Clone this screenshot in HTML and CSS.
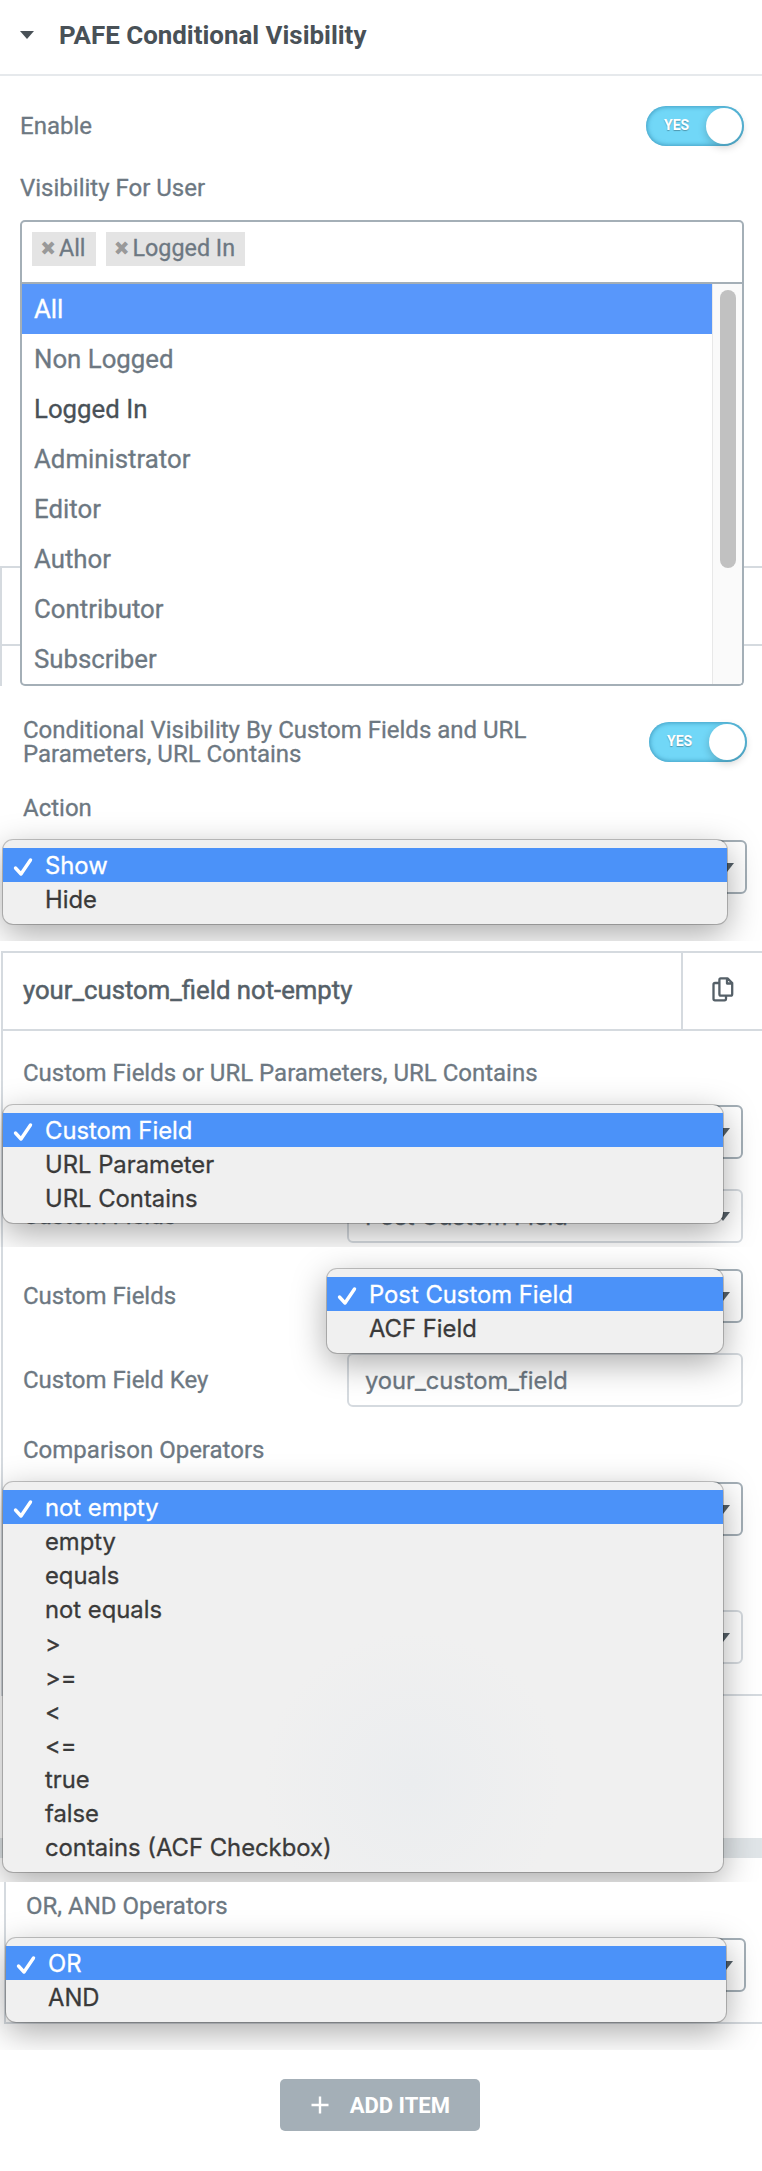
FILE: index.html
```html
<!DOCTYPE html>
<html lang="en">
<head>
    <meta charset="UTF-8">
    <meta name="viewport" content="width=device-width, initial-scale=1.0">
    <title>PAFE Conditional Visibility</title>
    <link rel="stylesheet" href="styles.css">
</head>
<body>
    <header class="panel-header">
        <span class="caret"></span>
        <h1>PAFE Conditional Visibility</h1>
    </header>

    <!-- Visibility for user -->
    <section class="section user-section">
        <div class="behind-panel"></div>
        <div class="control-row">
            <label>Enable</label>
            <div class="switch"><span class="switch-text">YES</span><span class="knob"></span></div>
        </div>
        <label class="stacked">Visibility For User</label>
        <div class="tags-box">
            <span class="tag"><b>×</b>All</span>
            <span class="tag"><b>×</b>Logged In</span>
        </div>
        <div class="results">
            <ul class="results-list">
                <li class="highlighted">All</li>
                <li>Non Logged</li>
                <li class="chosen">Logged In</li>
                <li>Administrator</li>
                <li>Editor</li>
                <li>Author</li>
                <li>Contributor</li>
                <li>Subscriber</li>
            </ul>
            <div class="scrollbar"><div class="thumb"></div></div>
        </div>
    </section>

    <!-- Action -->
    <section class="section action-section">
        <div class="control-row">
            <label>Conditional Visibility By Custom Fields and URL<br>Parameters, URL Contains</label>
            <div class="switch"><span class="switch-text">YES</span><span class="knob"></span></div>
        </div>
        <label class="stacked">Action</label>
        <div class="field">
            <div class="select active"></div>
            <ul class="menu">
                <li class="selected"><svg class="check" viewBox="0 0 20 20"><path d="M2.5 11 L8 17 L17.5 3"/></svg>Show</li>
                <li>Hide</li>
            </ul>
        </div>
    </section>

    <!-- Repeater item -->
    <section class="section item-section">
        <div class="item-box">
            <div class="item-header">
                <div class="item-title">your_custom_field not-empty</div>
                <button class="item-copy">
                    <svg width="22" height="26" viewBox="0 0 22 26"><path d="M7.2 6H3Q1.5 6 1.5 7.5V21.8Q1.5 23.3 3 23.3H12.5Q14 23.3 14 21.8V18.7M8.7 1.3H15.5L20.2 6V17Q20.2 18.7 18.6 18.7H9Q7.4 18.7 7.4 17V3Q7.4 1.3 8.7 1.3ZM15 1.5V6.5H20"/></svg>
                </button>
            </div>
            <div class="item-body">
                <label class="stacked">Custom Fields or URL Parameters, URL Contains</label>
                <div class="field">
                    <div class="select active"></div>
                    <ul class="menu">
                        <li class="selected"><svg class="check" viewBox="0 0 20 20"><path d="M2.5 11 L8 17 L17.5 3"/></svg>Custom Field</li>
                        <li>URL Parameter</li>
                        <li>URL Contains</li>
                    </ul>
                </div>
                <div class="field-row">
                    <label>Custom Fields</label>
                    <div class="select">Post Custom Field</div>
                </div>
            </div>
        </div>
    </section>

    <!-- Comparison -->
    <section class="section compare-section">
        <div class="compare-body">
            <div class="field-row">
                <label>Custom Fields</label>
                <div class="field">
                    <div class="select active"></div>
                    <ul class="menu">
                        <li class="selected"><svg class="check" viewBox="0 0 20 20"><path d="M2.5 11 L8 17 L17.5 3"/></svg>Post Custom Field</li>
                        <li>ACF Field</li>
                    </ul>
                </div>
            </div>
            <div class="field-row">
                <label>Custom Field Key</label>
                <div class="text-input">your_custom_field</div>
            </div>
            <label class="stacked">Comparison Operators</label>
            <div class="field">
                <div class="select active"></div>
                <ul class="menu tinted">
                    <li class="selected"><svg class="check" viewBox="0 0 20 20"><path d="M2.5 11 L8 17 L17.5 3"/></svg>not empty</li>
                    <li>empty</li>
                    <li>equals</li>
                    <li>not equals</li>
                    <li>&gt;</li>
                    <li>&gt;=</li>
                    <li>&lt;</li>
                    <li>&lt;=</li>
                    <li>true</li>
                    <li>false</li>
                    <li>contains (ACF Checkbox)</li>
                </ul>
            </div>
            <div class="select next-select"></div>
        </div>
        <div class="divider-bar"></div>
    </section>

    <!-- OR / AND -->
    <section class="section operator-section">
        <div class="operator-body">
            <label class="stacked">OR, AND Operators</label>
            <div class="field">
                <div class="select active"></div>
                <ul class="menu">
                    <li class="selected"><svg class="check" viewBox="0 0 20 20"><path d="M2.5 11 L8 17 L17.5 3"/></svg>OR</li>
                    <li>AND</li>
                </ul>
            </div>
        </div>
    </section>

    <div class="add-row">
        <button class="add-button">
            <svg width="18" height="18" viewBox="0 0 18 18"><path d="M9 0.5V17.5M0.5 9H17.5"/></svg>
            <span>ADD ITEM</span>
        </button>
    </div>
</body>
</html>
```
FILE: styles.css
```css
* {
    box-sizing: border-box;
}

body {
    margin: 0;
    background-color: #fff;
    font-family: Roboto, "Liberation Sans", sans-serif;
    font-size: 24px;
    line-height: 24px;
    color: #6d7882;
    -webkit-text-stroke: 0.3px;
}

ul {
    list-style: none;
    margin: 0;
    padding: 0;
}

button {
    border: none;
    padding: 0;
    background: none;
    font-family: inherit;
}

label {
    white-space: nowrap;
}

.stacked {
    display: block;
}

.panel-header {
    display: flex;
    align-items: center;
    height: 76px;
    padding: 0 20px 4px;
    border-bottom: 2px solid #e6e9ec;
}

.panel-header h1 {
    margin: 0 0 0 25px;
    font-size: 25.9px;
    font-weight: 700;
    color: #495157;
    -webkit-text-stroke: 0;
}

.caret {
    border: 7.5px solid transparent;
    border-top: 8px solid #495157;
    border-bottom: none;
}

.section {
    position: relative;
    overflow: hidden;
}

.control-row {
    display: flex;
    justify-content: space-between;
    align-items: center;
}

/* switch */
.switch {
    display: flex;
    align-items: center;
    justify-content: space-between;
    width: 98px;
    height: 40px;
    padding: 0 2px 0 18px;
    border-radius: 20px;
    background-color: #71d7f7;
    box-shadow: inset 0 0 4px 1px rgba(35, 120, 160, 0.6);
}

.switch-text {
    font-size: 14px;
    font-weight: 700;
    line-height: 38px;
    height: 40px;
    color: #fff;
    text-shadow: 0 1px 1px rgba(0, 0, 0, 0.3);
    -webkit-text-stroke: 0;
}

.knob {
    width: 36px;
    height: 36px;
    border-radius: 50%;
    background-color: #fff;
    box-shadow: 0 3px 8px rgba(0, 0, 0, 0.2);
}

/* user select */
.user-section {
    height: 610px;
    padding: 30px 18px 0 20px;
}

.user-section .stacked {
    margin: 30px 0 20px;
}

.behind-panel {
    position: absolute;
    top: 490px;
    left: 0;
    right: -2px;
    height: 130px;
    z-index: -1;
    border: 2px solid #d5dadf;
    background: linear-gradient(#d5dadf, #d5dadf) 0 76px / 100% 2px no-repeat;
}

.tags-box {
    display: flex;
    gap: 10px;
    height: 64px;
    padding: 10px;
    border: 2px solid #a4afb7;
    border-radius: 5px 5px 0 0;
    background-color: #fff;
}

.tag {
    height: 34px;
    padding: 0 10px;
    font-size: 23.3px;
    line-height: 32px;
    background-color: #e4e4e4;
}

.tag b {
    display: inline-block;
    width: 17px;
    color: #999;
    -webkit-text-stroke: 1.3px #999;
}

.results {
    display: flex;
    height: 402px;
    border: 2px solid #a4afb7;
    border-top: none;
    border-radius: 0 0 5px 5px;
    background-color: #fff;
    overflow: hidden;
}

.results-list {
    flex: 1;
}

.results-list li {
    height: 50px;
    padding-left: 12px;
    font-size: 25.8px;
    line-height: 51px;
}

.results-list .highlighted {
    background-color: #5897fb;
    color: #fff;
}

.results-list .chosen {
    color: #495157;
}

.scrollbar {
    width: 30px;
    padding: 6px 0 0 7px;
    border-left: 1px solid #e8e8e8;
    background-color: #fafafa;
}

.thumb {
    width: 16px;
    height: 278px;
    border-radius: 8px;
    background-color: #c1c1c1;
}

/* fields */
.field {
    position: relative;
}

.select,
.text-input {
    position: relative;
    height: 54px;
    padding-left: 16px;
    border: 2px solid #d5dadf;
    border-radius: 6px;
    font-family: Inter, sans-serif;
    font-size: 23.7px;
    line-height: 51px;
}

.select.active {
    border-color: #a4afb7;
}

.select::after {
    content: "";
    position: absolute;
    top: 21px;
    right: 11px;
    border: 7px solid transparent;
    border-top: 9px solid #556068;
    border-bottom: none;
}

/* native dropdown, opened over its select */
.menu {
    position: absolute;
    top: 0;
    left: -20px;
    right: 20px;
    z-index: 2;
    padding: 8px 0;
    border-radius: 10px;
    background-color: #f0f0f0;
    box-shadow: 0 0 0 1px rgba(0, 0, 0, 0.22), 0 10px 34px rgba(0, 0, 0, 0.34);
    font-family: Inter, "Liberation Sans", sans-serif;
    font-size: 23.8px;
    color: #3a3a3a;
}

.menu li {
    position: relative;
    height: 34px;
    padding-left: 42px;
    line-height: 35px;
    white-space: nowrap;
}

.menu .selected {
    background-color: #4b92f9;
    color: #fff;
}

.check {
    position: absolute;
    top: 9px;
    left: 10px;
    width: 20px;
    height: 20px;
    fill: none;
    stroke: #fff;
    stroke-width: 3.4;
    stroke-linecap: round;
    stroke-linejoin: round;
}

.menu.tinted {
    background-image: radial-gradient(circle at 410px 300px, #ebedef, #f0f0f0 150px);
}

.field-row {
    display: grid;
    grid-template-columns: 324px 396px;
    align-items: center;
    margin-top: 30px;
}

.action-section {
    height: 255px;
    padding: 32px 15px 0 23px;
}

.action-section .stacked {
    margin: 30px 0 20px;
}

.item-section {
    height: 306px;
    padding: 10px 0 0 1px;
}

.item-box {
    border: 2px solid #d5dadf;
    border-width: 2px 0 0 2px;
    height: 320px;
}

.item-header {
    display: flex;
    height: 78px;
    border-bottom: 2px solid #d5dadf;
}

.item-title {
    width: 678px;
    padding-left: 20px;
    font-size: 25.7px;
    line-height: 75px;
    color: #556068;
    -webkit-text-stroke: 0.5px;
}

.item-copy {
    flex: 1;
    padding: 1px 0 0;
    border-left: 2px solid #d5dadf;
}

.item-copy svg {
    fill: none;
    stroke: #556068;
    stroke-width: 2.3;
    stroke-linejoin: round;
}

.item-body {
    padding: 30px 19px 0 20px;
}

.item-body .stacked {
    margin-bottom: 20px;
}

.compare-section {
    height: 635px;
    padding-left: 1px;
}

.compare-body {
    padding: 22px 19px 30px 20px;
    border-left: 2px solid #d5dadf;
    border-bottom: 2px solid #d5dadf;
}

.compare-body .field-row:first-child {
    margin-top: 0;
}

.compare-body .stacked {
    margin: 31px 0 20px;
}

.next-select {
    margin-top: 74px;
}

.divider-bar {
    height: 20px;
    margin: 142px 0 0 -1px;
    background-color: #e0e5e8;
}

.operator-section {
    height: 168px;
    padding-left: 4px;
}

.operator-body {
    padding: 12px 16px 30px 20px;
    border-left: 2px solid #d5dadf;
    border-bottom: 2px solid #d5dadf;
}

.operator-body .stacked {
    margin-bottom: 20px;
}

.add-row {
    height: 121px;
    padding: 29px 0 0 280px;
}

.add-button {
    display: flex;
    align-items: center;
    justify-content: space-between;
    width: 200px;
    height: 52px;
    padding: 0 30px 0 31px;
    border-radius: 5px;
    background-color: #a4afb7;
    color: #fff;
    font-size: 22px;
    font-weight: 700;
    -webkit-text-stroke: 0;
}

.add-button svg {
    stroke: #fff;
    stroke-width: 2.4;
}
```
